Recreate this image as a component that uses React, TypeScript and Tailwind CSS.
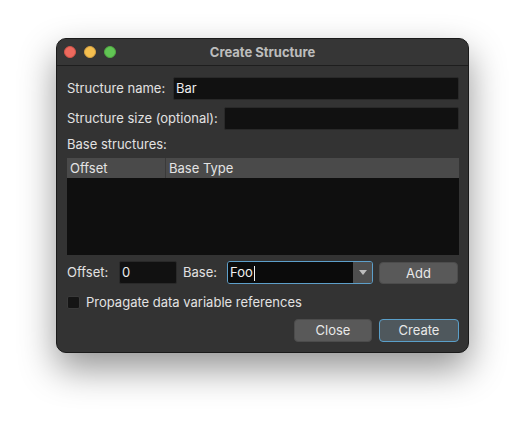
import { useState } from 'react';

const font = { fontFamily: 'Inter, "Noto Sans", sans-serif' };

function TrafficLights() {
  return (
    <div className="flex items-center gap-[8px] pl-[7px]">
      <span className="w-[12px] h-[12px] rounded-full bg-[#ed6a5e] border border-[#d25549]" />
      <span className="w-[12px] h-[12px] rounded-full bg-[#f5bf4f] border border-[#d6a243]" />
      <span className="w-[12px] h-[12px] rounded-full bg-[#61c554] border border-[#52a842]" />
    </div>
  );
}

function TextField({ value, className }: { value: string; className?: string }) {
  return (
    <div
      className={
        'h-[23px] bg-[#111111] border border-[#292929] rounded-[2px] flex items-center px-[2px] pt-px text-[13px] text-[#ececec] ' +
        (className ?? '')
      }
    >
      {value}
    </div>
  );
}

function Button({ label, primary }: { label: string; primary?: boolean }) {
  return (
    <button
      className={
        'h-[23px] rounded-[4px] text-[13px] text-[#e8e8e8] flex items-center justify-center pt-px ' +
        (primary
          ? 'w-[80px] bg-[#4f585d] border border-[#5a9fc9]'
          : 'w-[78px] bg-[#595959] border border-[#4c4c4c]')
      }
    >
      {label}
    </button>
  );
}

export default function App() {
  const [checked, setChecked] = useState(false);

  return (
    <div className="w-[526px] h-[428px] bg-white pl-[56px] pt-[38px]" style={font}>
      <div className="w-[413px] h-[315px] rounded-[10px] bg-[#333333] border border-[#1a1a1a] shadow-[0_16px_36px_rgba(0,0,0,0.42)] flex flex-col overflow-hidden">
        <div className="h-[27px] shrink-0 grid grid-cols-[1fr_auto_1fr] items-center border-b border-[#1e1e1e] bg-[#363636]">
          <TrafficLights />
          <span className="text-[13px] font-bold text-[#bdbdbd] pt-px">Create Structure</span>
          <span />
        </div>

        <div className="flex flex-col pl-[10px] pr-[9px] pt-[11px] text-[13px] text-[#e2e2e2]">
          <div className="flex items-center h-[23px]">
            <span className="w-[106px] shrink-0 pt-px">Structure name:</span>
            <TextField value="Bar" className="flex-1" />
          </div>

          <div className="flex items-center h-[23px] mt-[7px]">
            <span className="w-[157px] shrink-0 pt-px">Structure size (optional):</span>
            <TextField value="" className="flex-1" />
          </div>

          <div className="flex items-center h-[28px] pt-px">Base structures:</div>

          <div className="h-[97px] flex flex-col bg-[#0f0f0f]">
            <div className="h-[20px] flex bg-[#4a4a4a] text-[#e4e4e4]">
              <div className="w-[99px] border-r border-[#3a3a3a] pl-[3px] pt-px flex items-center">Offset</div>
              <div className="flex-1 pl-[3px] pt-px flex items-center">Base Type</div>
            </div>
            <div className="flex-1" />
          </div>

          <div className="flex items-center h-[23px] mt-[6px]">
            <span className="w-[52px] shrink-0 pt-px">Offset:</span>
            <TextField value="0" className="w-[58px]" />
            <span className="ml-[6px] w-[44px] shrink-0 pt-px">Base:</span>
            <div className="w-[146px] h-[23px] flex border-[1.5px] border-[#5d9fca] rounded-[3px] overflow-hidden">
              <div className="flex-1 bg-[#0b0b0b] flex items-center px-[2px] pt-px text-[#f0f0f0]">
                Foo<span className="w-px h-[15px] bg-[#f0f0f0] ml-px" />
              </div>
              <div className="w-[19px] bg-[#4e4e4e] flex items-center justify-center">
                <svg width="8" height="5" viewBox="0 0 8 5">
                  <path d="M0 0h8L4 5z" fill="#bdbdbd" />
                </svg>
              </div>
            </div>
            <div className="ml-[6px]">
              <button className="w-[79px] h-[22px] rounded-[4px] bg-[#595959] border border-[#4c4c4c] text-[13px] text-[#e8e8e8] pt-px">
                Add
              </button>
            </div>
          </div>

          <label className="flex items-center h-[13px] mt-[12px] gap-[6px]" onClick={() => setChecked(!checked)}>
            <span className="w-[13px] h-[13px] bg-[#151515] border border-[#3a3a3a] rounded-[2px]" />
            <span className="pt-px">Propagate data variable references</span>
          </label>

          <div className="flex justify-end gap-[7px] mt-[10px]">
            <Button label="Close" />
            <Button label="Create" primary />
          </div>
        </div>
      </div>
    </div>
  );
}
